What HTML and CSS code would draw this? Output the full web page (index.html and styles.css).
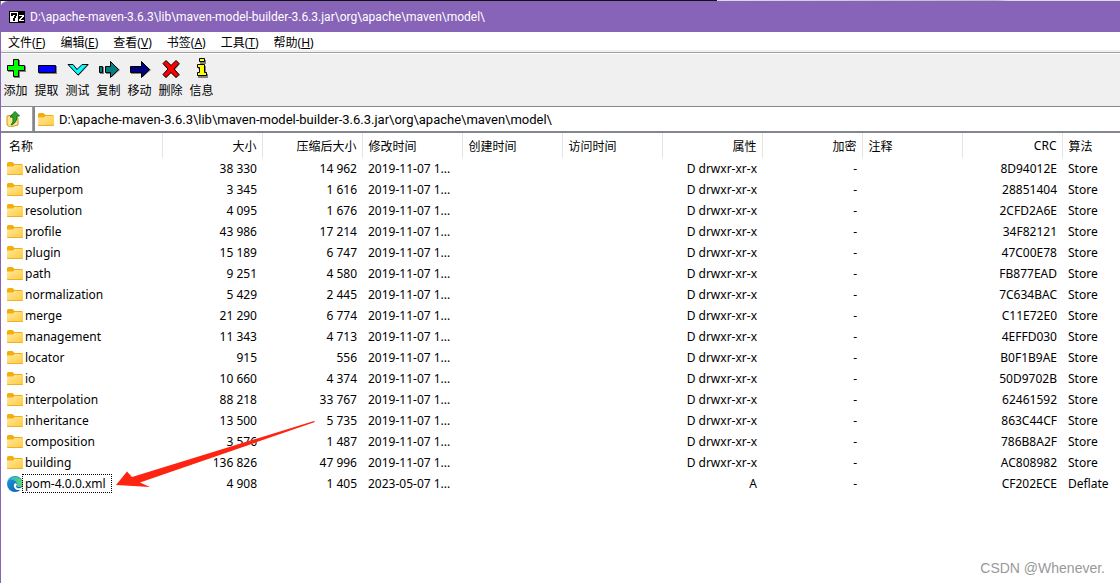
FILE: index.html
```
<!DOCTYPE html>
<html lang="zh-CN">
<head>
<meta charset="utf-8">
<title>7-Zip</title>
<link rel="stylesheet" href="styles.css">
<script src="app.js" defer></script>
</head>
<body>
<svg class="defs" aria-hidden="true">
  <defs>
    <linearGradient id="fold" x1="0" y1="0" x2="1" y2="1"><stop offset="0" stop-color="#ffe9a0"/><stop offset="1" stop-color="#ffc93c"/></linearGradient>
    <linearGradient id="edgeBlue" x1="0" y1="0" x2="1" y2="1"><stop offset="0" stop-color="#1b9de2"/><stop offset="1" stop-color="#0f55a8"/></linearGradient>
    <linearGradient id="edgeGreen" x1="0" y1="0" x2="1" y2="0"><stop offset="0" stop-color="#2aa9e0"/><stop offset="1" stop-color="#5fdc62"/></linearGradient>
    <symbol id="folder" viewBox="0 0 16 13"><path d="M0 1.500Q0 0 1.500 0H5.500L7.500 2H14.500Q16 2 16 3.500V6H0Z" fill="#f3ae0e"/><path d="M0 4.500H6L7.500 3H15Q16 3 16 4V12Q16 13 15 13H1Q0 13 0 12Z" fill="url(#fold)"/><path d="M0 12H16Q16 13 15 13H1Q0 13 0 12Z" fill="#eeb12c"/></symbol>
  </defs>
</svg>
<div class="backdrop"></div>
<main class="window">
  <header class="titlebar">
    <svg class="logo" viewBox="0 0 16 12" shape-rendering="crispEdges"><path d="M0 0H16V12H0Z" fill="#000"/><path d="M1 1H9V11H1Z" fill="#fff"/><path d="M2 2H8V5H7V7H6V10H4V7H5V5H6V4H4V5H2Z" fill="#000"/><path d="M10 4H15V6H14V7H13V8H12V9H15V10H10V8H11V7H12V6H13V5H10Z" fill="#fff"/></svg>
    <h1 class="title">D:\apache-maven-3.6.3\lib\maven-model-builder-3.6.3.jar\org\apache\maven\model\</h1>
  </header>
  <nav class="menu">
    <button>文件(<u>F</u>)</button><button>编辑(<u>E</u>)</button><button>查看(<u>V</u>)</button><button>书签(<u>A</u>)</button><button>工具(<u>T</u>)</button><button>帮助(<u>H</u>)</button>
  </nav>
  <div class="toolbar">
    <button><svg viewBox="0 0 24 24"><path d="M10 4h6v6h6v6h-6v6h-6v-6H4v-6h6z" fill="#808080"/><path d="M9.500 3.500h5v6h6v5h-6v6h-5v-6h-6v-5h6z" fill="#0f0" stroke="#000"/></svg>添加</button>
    <button><svg viewBox="0 0 24 24"><path d="M4 10h18v8H4z" fill="#808080"/><path d="M3.500 9.500h17v7h-17z" fill="#00f" stroke="#000"/></svg>提取</button>
    <button><svg viewBox="0 0 24 24"><path d="M3 9.500h5l4 4 5-5h6L12.500 20z" fill="#808080"/><path d="M2 8.500h5l4 5 5-5h6L12 19z" fill="#0ff" stroke="#000"/></svg>测试</button>
    <button><svg viewBox="0 0 24 24"><path d="M3 11h4v7H3zM9 11h6V7l8 7-8 7v-3H9z" fill="#808080"/><path d="M2.500 10.500h3v6h-3zM8.500 10.500h5v-5l8 8-8 8v-5h-5z" fill="#008080" stroke="#000"/></svg>复制</button>
    <button><svg viewBox="0 0 24 24"><path d="M3 11h12V7l8 7-8 7v-3H3z" fill="#808080"/><path d="M2.500 10.500h11v-5l8 8-8 8v-5h-11z" fill="#000080" stroke="#000"/></svg>移动</button>
    <button><svg viewBox="0 0 24 24"><path d="M4 8l4-3 5 5 5-5 3 3-5 6 5 5-4 3-5-5-5 5-3-3 5-5z" fill="#808080"/><path d="M4 7.500L7 4.500l5 5 5-5 3 3-5 5.500 5 5.500-3 3-5-5-5 5-3-3 5-5.500z" fill="#f00" stroke="#000"/></svg>删除</button>
    <button><svg viewBox="0 0 24 24"><path d="M10 4h6v4h-6zM8 10h8v8h2v4H8v-4h2v-5H8z" fill="#808080"/><path d="M9.500 2.500h5v3h-5zM7.500 8.500h7v8h2v3h-9v-3h2v-5h-2z" fill="#ff0" stroke="#000"/></svg>信息</button>
  </div>
  <div class="address">
    <button class="up" aria-label="Up"><svg viewBox="0 0 16 16"><path d="M1 5l5-1 1 2 5 1v7l-8 2-3-2z" fill="#ffe58a" stroke="#c99b20"/><path d="M5 14Q8 12 7 6H4L9 0.500L13.500 5H11Q11 12 5 14Z" fill="#2ba52b" stroke="#126b18"/></svg></button>
    <label class="path"><svg class="bigfolder"><use href="#folder"/></svg><input aria-label="Path" value="D:\apache-maven-3.6.3\lib\maven-model-builder-3.6.3.jar\org\apache\maven\model\"></label>
  </div>
  <div class="list">
    <table>
      <colgroup><col class="c-name"><col span="9" class="c-std"><col></colgroup>
      <thead><tr><th>名称</th><th class="r">大小</th><th class="r">压缩后大小</th><th>修改时间</th><th>创建时间</th><th>访问时间</th><th class="r">属性</th><th class="r">加密</th><th>注释</th><th class="r">CRC</th><th>算法</th></tr></thead>
      <tbody id="rows"></tbody>
    </table>
    <svg class="arrow" viewBox="0 0 200 70"><path d="M198 1L199 2L24 62.500L34 67L0 65L11 51.500L16 57Z" fill="#fe2412"/></svg>
  </div>
  <footer class="mark">CSDN @Whenever.</footer>
</main>
</body>
</html>
```
FILE: styles.css
```
* { box-sizing: border-box; }
body {
  margin: 0;
  min-height: 100vh;
  display: flex;
  flex-direction: column;
  background: #fff;
  color: #000;
  font: 12px "Noto Sans", "Noto Sans CJK SC", sans-serif;
}
button, input { font: inherit; color: inherit; border: 0; padding: 0; background: none; }
.defs { position: absolute; width: 0; height: 0; }
.backdrop { height: 1px; background: linear-gradient(90deg, #111 64%, #dcdcdc 64%, #bbb 89%, #dcdcdc 90%); }
.window { flex: 1; display: flex; flex-direction: column; border-left: 1px solid #8764b8; }
.titlebar { height: 31px; margin-left: -1px; display: flex; align-items: center; gap: 5px; padding-left: 9px; background: #8764b8; border-top-left-radius: 8px; }
.logo { width: 16px; height: 12px; }
.title { margin: 0; font-size: 12px; font-weight: 400; color: #fff; font-family: Roboto, sans-serif; }
.menu { height: 21px; display: flex; gap: 15px; padding: 0 7px 1px; border-bottom: 1px solid #a0a0a0; background: linear-gradient(#fff 18px, #f0f0f0 18px); }
.toolbar { height: 53px; display: flex; margin-top: 1px; background: #f0f0f0; border-bottom: 1px solid #828790; }
.toolbar button { width: 31px; display: flex; flex-direction: column; align-items: center; gap: 2px; line-height: 18px; white-space: nowrap; padding: 2px 2px 0 0; }
.toolbar svg { width: 24px; height: 24px; flex: none; }
.address { height: 26px; display: flex; border-bottom: 2px solid #828790; }
.up { width: 32px; border-right: 1px solid #a0a0a0; display: grid; place-items: center; padding-right: 6px; }
.up svg { width: 16px; height: 16px; }
.path { flex: 1; display: flex; align-items: center; gap: 5px; padding-left: 3px; border-left: 2px solid #828790; }
.bigfolder { width: 16px; height: 13px; }
.path input { flex: 1; min-width: 0; font-family: Roboto, sans-serif; font-size: 13px; outline: 0; }
.list { position: relative; }
table { width: 100%; table-layout: fixed; border-collapse: collapse; }
.c-name { width: 161px; }
.c-std { width: 100px; }
th { height: 25px; padding: 0 5px 0 6px; font-weight: 400; text-align: left; border-right: 1px solid #e5e5e5; }
th:first-child { padding-left: 8px; }
th:last-child { border-right: 0; }
td { height: 21px; padding: 0 5px 0 6px; white-space: nowrap; line-height: 17px; }
.r { text-align: right; }
.file { display: flex; align-items: center; }
.icon { width: 16px; height: 13px; flex: none; }
.icon.edge { height: 16px; }
.name { padding: 0 2px; }
.focus .name { outline: 1px dotted #000; padding-right: 5px; }
.arrow { position: absolute; left: 115px; top: 287px; width: 200px; height: 70px; }
.mark { margin-top: auto; padding: 0 15px 7px 0; text-align: right; font: 14px "Liberation Sans", sans-serif; color: #999; }
```
FILE: app.js
```
const files = [
  ["validation", "38 330", "14 962", "8D94012E"],
  ["superpom", "3 345", "1 616", "28851404"],
  ["resolution", "4 095", "1 676", "2CFD2A6E"],
  ["profile", "43 986", "17 214", "34F82121"],
  ["plugin", "15 189", "6 747", "47C00E78"],
  ["path", "9 251", "4 580", "FB877EAD"],
  ["normalization", "5 429", "2 445", "7C634BAC"],
  ["merge", "21 290", "6 774", "C11E72E0"],
  ["management", "11 343", "4 713", "4EFFD030"],
  ["locator", "915", "556", "B0F1B9AE"],
  ["io", "10 660", "4 374", "50D9702B"],
  ["interpolation", "88 218", "33 767", "62461592"],
  ["inheritance", "13 500", "5 735", "863C44CF"],
  ["composition", "3 576", "1 487", "786B8A2F"],
  ["building", "136 826", "47 996", "AC808982"],
  ["pom-4.0.0.xml", "4 908", "1 405", "CF202ECE"]
];
const folder = '<svg class="icon"><use href="#folder"/></svg>';
const edge = '<svg class="icon edge" viewBox="0 0 16 16"><circle cx="8" cy="8" r="8" fill="url(#edgeBlue)"/><path d="M1 5A8 8 0 0 1 16 8Q16 11 12 11Q9 11 10 9Q10 5 6 4Q3 3 1 5Z" fill="url(#edgeGreen)"/><path d="M10 9Q8 10 10 12Q13 13 15 11L16 14L10 14Q6 12 7 8Q9 6 10 9Z" fill="#fff"/></svg>';
document.getElementById("rows").innerHTML = files.map(([name, size, packed, crc]) => {
  const xml = name.endsWith(".xml");
  return `<tr${xml ? ' class="focus"' : ""}><td><div class="file">${xml ? edge : folder}<span class="name">${name}</span></div></td>
    <td class="r">${size}</td><td class="r">${packed}</td><td>${xml ? "2023-05-07" : "2019-11-07"} 1...</td><td></td><td></td>
    <td class="r">${xml ? "A" : "D drwxr-xr-x"}</td><td class="r">-</td><td></td><td class="r">${crc}</td><td>${xml ? "Deflate" : "Store"}</td></tr>`;
}).join("");
```
